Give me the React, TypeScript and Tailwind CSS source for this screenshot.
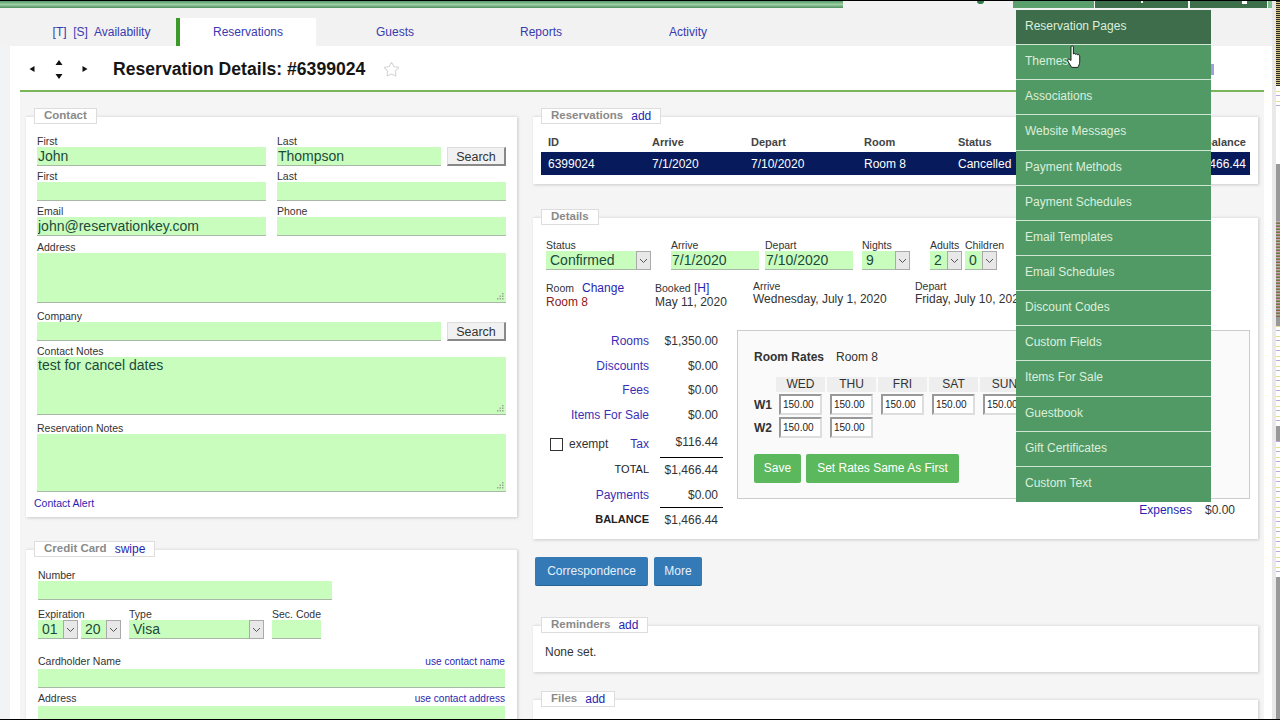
import React from 'react';
import { Star } from 'lucide-react';

const menuItems = [
  'Reservation Pages', 'Themes', 'Associations', 'Website Messages', 'Payment Methods', 'Payment Schedules', 'Email Templates',
  'Email Schedules', 'Discount Codes', 'Custom Fields', 'Items For Sale', 'Guestbook', 'Gift Certificates', 'Custom Text',
];

const green = 'bg-[#c9fdbd] border-b-[1.5px] border-[#a9b8a6] text-[14px] text-[#1c4a3c] outline-none';

function Label({ children }: { children: React.ReactNode }) {
  return <div className="h-[13px] leading-[15px] text-[10.5px] text-[#333] whitespace-nowrap">{children}</div>;
}

function TextInput({ value = '', className = '' }: { value?: string; className?: string }) {
  return <input readOnly defaultValue={value} className={'block h-[19px] px-[1px] ' + green + ' ' + className} />;
}

function TextBox({ value = '', className = '' }: { value?: string; className?: string }) {
  return (
    <div className="relative">
      <textarea readOnly defaultValue={value} className={'block w-full px-[1px] leading-[16px] resize-none ' + green + ' ' + className} />
      <svg className="absolute right-[2px] bottom-[3px]" width="7" height="7" viewBox="0 0 7 7" fill="#9aa896">
        <rect x="5" y="0" width="1.500" height="1.500" />
        <rect x="2.500" y="2.500" width="1.500" height="1.500" />
        <rect x="5" y="2.500" width="1.500" height="1.500" />
        <rect x="0" y="5" width="1.500" height="1.500" />
        <rect x="2.500" y="5" width="1.500" height="1.500" />
        <rect x="5" y="5" width="1.500" height="1.500" />
      </svg>
    </div>
  );
}

function SearchButton() {
  return (
    <button className="ml-[6px] w-[59px] h-[19px] text-[12.5px] text-[#333] bg-[#f1f1f1] border border-[#ddd] border-r-[#888] border-b-[#888] border-r-2 border-b-2">
      Search
    </button>
  );
}

function Select({ value, className = '' }: { value: string; className?: string }) {
  return (
    <div className={'flex h-[19px] ' + className}>
      <div className={'flex-1 pl-[4px] leading-[19px] ' + green}>{value}</div>
      <div className="w-[15px] bg-[#e8e8e8] border border-[#aaa] flex items-center justify-center">
        <svg width="9" height="6" viewBox="0 0 9 6" fill="none" stroke="#555" strokeWidth="1"><path d="M1 1l3.5 3.5L8 1" /></svg>
      </div>
    </div>
  );
}

function Panel({ legend, add, className = '', children }: { legend: string; add?: string; className?: string; children?: React.ReactNode }) {
  return (
    <section className={'relative bg-white border-t border-[#e6e6e6] shadow-[1px_1px_3px_rgba(0,0,0,0.18)] ' + className}>
      <div className="absolute -top-[9px] left-[8px] h-[16px] px-[9px] flex items-center gap-[8px] bg-white border border-[#ddd] text-[12px] leading-none">
        <span className="font-bold text-[11.5px] text-[#8a8a8a]">{legend}</span>
        {add && <a className="text-[#2a1fb0]">{add}</a>}
      </div>
      {children}
    </section>
  );
}

function TotalRow({ label, value, h, link, bold, line, low, children }: { label: string; value: string; h: string; link?: boolean; bold?: boolean; line?: boolean; low?: boolean; children?: React.ReactNode }) {
  return (
    <div className={'flex items-center text-[12px] ' + h}>
      <div className={'w-[116px] flex justify-end ' + (low ? 'mt-[4px] ' : '') + (link ? 'text-[#3a2fb5]' : bold ? 'font-bold text-[11px] text-[#222]' : 'text-[11px] text-[#222]')}>
        {children}
        {label}
      </div>
      <div className={'ml-[11px] w-[63px] h-full pr-[5px] flex items-center justify-end text-[#333] ' + (line ? 'border-t border-black' : '')}>{value}</div>
    </div>
  );
}

function RateInput() {
  return (
    <input
      readOnly
      defaultValue="150.00"
      className="block ml-[3px] w-[43px] h-[21px] pl-[2px] text-[10px] text-[#222] bg-white border-2 border-t-[#999] border-l-[#999] border-r-[#ddd] border-b-[#ddd] outline-none"
    />
  );
}

function RoomRates() {
  const days = ['WED', 'THU', 'FRI', 'SAT', 'SUN'];
  return (
    <div className="h-[169px] pl-[16px] pt-[19px] border border-[#ccc] bg-[#fafafa]">
      <div className="flex text-[12px] leading-[14px] text-[#333]">
        <span className="font-bold w-[82px]">Room Rates</span>
        <span>Room 8</span>
      </div>
      <div className="mt-[13px] grid grid-cols-[20px_repeat(5,49px)] gap-x-[2px] gap-y-[2px] items-center">
        <div />
        {days.map((d) => (
          <div key={d} className="h-[15px] leading-[15px] bg-[#eee] text-center text-[12px] text-[#333]">{d}</div>
        ))}
        <div className="text-[12px] font-bold text-[#333]">W1</div>
        {days.map((d) => <RateInput key={d} />)}
        <div className="text-[12px] font-bold text-[#333]">W2</div>
        <RateInput />
        <RateInput />
      </div>
      <div className="mt-[16px] flex gap-[5px] text-[12px] text-white">
        <button className="w-[47px] h-[29px] pb-[1px] bg-[#5cb85c] rounded-[2px]">Save</button>
        <button className="w-[153px] h-[29px] pb-[1px] bg-[#5cb85c] rounded-[2px]">Set Rates Same As First</button>
      </div>
    </div>
  );
}

function ContactPanel() {
  return (
    <Panel legend="Contact" className="h-[401px] pl-[11px] pr-[11px] pt-[17px]">
      <div className="flex">
        <div className="w-[229px]"><Label>First</Label><TextInput value="John" className="w-full" /></div>
        <div className="ml-[11px]"><Label>Last</Label>
          <div className="flex"><TextInput value="Thompson" className="w-[164px]" /><SearchButton /></div>
        </div>
      </div>
      <div className="flex mt-[3px]">
        <div className="w-[229px]"><Label>First</Label><TextInput className="w-full" /></div>
        <div className="ml-[11px] w-[229px]"><Label>Last</Label><TextInput className="w-full" /></div>
      </div>
      <div className="flex mt-[3px]">
        <div className="w-[229px]"><Label>Email</Label><TextInput value="john@reservationkey.com" className="w-full" /></div>
        <div className="ml-[11px] w-[229px]"><Label>Phone</Label><TextInput className="w-full" /></div>
      </div>
      <div className="mt-[4px]"><Label>Address</Label><TextBox className="h-[50px]" /></div>
      <div className="mt-[6px]"><Label>Company</Label>
        <div className="flex"><TextInput className="w-[404px]" /><SearchButton /></div>
      </div>
      <div className="mt-[3px]"><Label>Contact Notes</Label><TextBox value="test for cancel dates" className="h-[58px]" /></div>
      <div className="mt-[6px]"><Label>Reservation Notes</Label><TextBox className="h-[58px]" /></div>
      <a className="block mt-[4px] -ml-[3px] text-[10.5px] leading-[14px] text-[#2a1fb0]">Contact Alert</a>
    </Panel>
  );
}

function CardPanel() {
  return (
    <Panel legend="Credit Card" add="swipe" className="mt-[32px] h-[220px] pl-[12px] pr-[12px] pt-[18px]">
      <Label>Number</Label>
      <TextInput className="w-[294px]" />
      <div className="flex mt-[7px]">
        <div className="w-[91px]">
          <Label>Expiration</Label>
          <div className="flex gap-[3px]">
            <Select value="01" className="w-[40px]" />
            <Select value="20" className="w-[40px]" />
          </div>
        </div>
        <div className="w-[143px]"><Label>Type</Label><Select value="Visa" className="w-[135px]" /></div>
        <div className="w-[49px]"><Label>Sec. Code</Label><TextInput className="w-full" /></div>
      </div>
      <div className="mt-[15px] flex justify-between"><Label>Cardholder Name</Label><a className="text-[10.1px] leading-[15px] text-[#2a1fb0]">use contact name</a></div>
      <TextInput className="w-[467px]" />
      <div className="mt-[3px] flex justify-between"><Label>Address</Label><a className="text-[10.1px] leading-[15px] text-[#2a1fb0]">use contact address</a></div>
      <TextInput className="w-[467px]" />
    </Panel>
  );
}

function ReservationsPanel() {
  return (
    <Panel legend="Reservations" add="add" className="h-[68px] pl-[8px] pr-[8px] pt-[17px]">
      <div className="flex h-[16px] mb-[2px] items-center text-[11px] font-bold text-[#444]">
        <span className="pl-[7px] w-[111px]">ID</span>
        <span className="w-[99px]">Arrive</span>
        <span className="w-[113px]">Depart</span>
        <span className="w-[94px]">Room</span>
        <span>Status</span>
        <span className="ml-auto pr-[4px]">Balance</span>
      </div>
      <div className="flex h-[23px] items-center bg-[#061a5c] text-[12px] text-white">
        <span className="pl-[7px] w-[111px]">6399024</span>
        <span className="w-[99px]">7/1/2020</span>
        <span className="w-[113px]">7/10/2020</span>
        <span className="w-[94px]">Room 8</span>
        <span>Cancelled</span>
        <span className="ml-auto pr-[4px]">$1,466.44</span>
      </div>
    </Panel>
  );
}

function DetailsPanel() {
  return (
    <Panel legend="Details" className="mt-[33px] h-[322px] pl-[13px] pt-[22px]">
      <div className="flex text-[10.5px] leading-[11px] text-[#333]">
        <div className="w-[105px]"><div>Status</div><Select value="Confirmed" /></div>
        <div className="ml-[20px] w-[88px]"><div>Arrive</div><TextInput value="7/1/2020" className="w-full" /></div>
        <div className="ml-[6px] w-[88px]"><div>Depart</div><TextInput value="7/10/2020" className="w-full" /></div>
        <div className="ml-[9px] w-[48px]"><div>Nights</div><Select value="9" /></div>
        <div className="ml-[20px] w-[32px]"><div>Adults</div><Select value="2" /></div>
        <div className="ml-[3px] w-[32px]"><div>Children</div><Select value="0" /></div>
      </div>
      <div className="flex mt-[11px] text-[12px] leading-[14px] text-[#333]">
        <div className="w-[109px]">
          <div><span className="text-[10.5px]">Room</span><a className="ml-[8px] text-[#2a1fb0]">Change</a></div>
          <div className="text-[#8b1a1a]">Room 8</div>
        </div>
        <div className="w-[98px]">
          <div><span className="text-[10.5px]">Booked</span> <a className="text-[#2a1fb0]">[H]</a></div>
          <div>May 11, 2020</div>
        </div>
        <div className="w-[162px] -mt-[2px]">
          <div className="text-[10.5px]">Arrive</div>
          <div className="-mt-[1px]">Wednesday, July 1, 2020</div>
        </div>
        <div className="-mt-[2px]">
          <div className="text-[10.5px]">Depart</div>
          <div className="-mt-[1px]">Friday, July 10, 2020</div>
        </div>
      </div>
      <div className="flex mt-[21px] -ml-[13px]">
        <div className="w-[204px] -mt-[1px]">
          <TotalRow label="Rooms" value="$1,350.00" h="h-[24.5px]" link />
          <TotalRow label="Discounts" value="$0.00" h="h-[24.5px]" link />
          <TotalRow label="Fees" value="$0.00" h="h-[24.5px]" link />
          <TotalRow label="Items For Sale" value="$0.00" h="h-[24.5px]" link />
          <TotalRow label="Tax" value="$116.44" h="h-[30px]" link low>
            <span className="mr-auto ml-[17px] flex items-center text-[#333]">
              <span className="w-[13px] h-[13px] border border-[#333] bg-white mr-[6px]" />
              exempt
            </span>
          </TotalRow>
          <TotalRow label="TOTAL" value="$1,466.44" h="h-[25px]" line />
          <TotalRow label="Payments" value="$0.00" h="h-[25px]" link />
          <TotalRow label="BALANCE" value="$1,466.44" h="h-[24px]" bold line />
        </div>
        <div className="w-[513px]">
          <RoomRates />
          <div className="mt-[4px] flex justify-end text-[12px] leading-[14px] pr-[15px]">
            <a className="text-[#2a1fb0]">Expenses</a>
            <span className="ml-[13px] text-[#333]">$0.00</span>
          </div>
        </div>
      </div>
    </Panel>
  );
}

function NoiseStrip() {
  const dots = 'bg-[repeating-linear-gradient(0deg,#2a2a2a_0_1px,#d6c27a_1px_2px)]';
  const colored = 'bg-[repeating-linear-gradient(0deg,#8a6a4a_0_1px,#7f9a6a_1px_2px,#c9a4b8_2px_3px)]';
  const specks = 'bg-[repeating-linear-gradient(0deg,#fff_0_5px,#b9a8d8_5px_6px,#fff_6px_9px,#e6e08a_9px_10px)]';
  return (
    <div className="w-[8px] flex bg-[#eee]">
      <div className="w-[4px] bg-[#e9e9e9]" />
      <div className="w-[4px] flex flex-col">
        <div className={'h-[85px] shrink-0 ' + dots} />
        <div className="h-[78px] shrink-0 bg-white"><div className={'h-[25px] ' + specks} /></div>
        <div className="h-[57px] shrink-0 bg-[#999]" />
        <div className={'h-[96px] shrink-0 ' + colored} />
        <div className="h-[9px] shrink-0 bg-[#999]" />
        <div className={'h-[100px] shrink-0 ' + specks} />
        <div className="h-[15px] shrink-0 bg-[#999]" />
        <div className={'h-[136px] shrink-0 ' + specks} />
        <div className="flex-1 bg-[#999]" />
      </div>
    </div>
  );
}

export default function App() {
  return (
    <div className="relative w-[1280px] h-[720px] overflow-hidden flex border-t border-b border-black bg-[#f2f3f4] font-['Liberation_Sans',Arial,sans-serif]">
      <div className="w-[1272px] flex flex-col">
        <div className="h-[7px] flex shrink-0">
          <div className="w-[843px] bg-linear-to-b from-[#55996a] via-[#9ad0a4] to-[#4f8f5f]" />
          <div className="w-[169px] bg-[#f3f3f3] flex justify-end pr-[28px]"><div className="w-[7px] h-[3px] rounded-b-full bg-[#2f7a4a]" /></div>
          <div className="w-[81px] ml-[1px] bg-[#5a9f6c]" />
          <div className="w-[93px] ml-[1px] bg-[#3c6e4a] flex justify-center"><div className="w-[2px] h-[2px] bg-white" /></div>
          <div className="w-[77px] ml-[2px] bg-[#3c6e4a] flex justify-end pr-[20px]"><div className="w-[5px] h-[3px] bg-white" /></div>
          <div className="flex-1 ml-[1px] bg-[#7fbf8f]" />
        </div>

        <div className="h-[38px] shrink-0 pl-[27px] flex items-end bg-[#f2f2f2] text-[12px] text-[#3a3ab0]">
          <a className="w-[149px] h-[28px] leading-[28px] text-center">[T]&nbsp; [S]&nbsp; Availability</a>
          <a className="w-[140px] h-[28px] leading-[28px] text-center bg-white border-l-4 border-[#3b9a2b]">Reservations</a>
          <a className="w-[158px] h-[28px] leading-[28px] text-center">Guests</a>
          <a className="w-[134px] h-[28px] leading-[28px] text-center">Reports</a>
          <a className="w-[160px] h-[28px] leading-[28px] text-center">Activity</a>
        </div>

        <div className="flex-1 min-h-0 ml-[10px] bg-white pr-[8px] pl-[10px] overflow-hidden">
          <div className="h-[46px] pt-[2px] flex items-center border-b-2 border-[#7ab55c]">
            <svg width="70" height="26" viewBox="0 0 70 26" fill="#111">
              <path d="M9.500 13l5-3v6z" />
              <path d="M39 4l3.500 5h-7zM39 23l3.500-5h-7z" />
              <path d="M62.500 10l5 3-5 3z" />
            </svg>
            <h1 className="ml-[23px] text-[17.6px] font-bold text-[#151515]">Reservation Details: #6399024</h1>
            <Star className="ml-[18px] text-[#d5d5d5]" size={17} strokeWidth={1.5} />
            <div className="ml-auto mr-[50px] w-[3px] h-[11px] bg-[#a0a0dc]" />
          </div>

          <div className="h-[640px] bg-[#f5f5f6] pl-[6px] pt-[24px] flex gap-[16px]">
            <div className="w-[491px] shrink-0">
              <ContactPanel />
              <CardPanel />
            </div>
            <div className="w-[725px] shrink-0">
              <ReservationsPanel />
              <DetailsPanel />
              <div className="mt-[18px] ml-[2px] flex gap-[6px] text-[12px] text-[#e6f0fa]">
                <button className="w-[113px] h-[29px] bg-[#337ab7] rounded-[2px] border-b border-[#2a6496]">Correspondence</button>
                <button className="w-[48px] h-[29px] bg-[#337ab7] rounded-[2px] border-b border-[#2a6496]">More</button>
              </div>
              <Panel legend="Reminders" add="add" className="mt-[39px] h-[47px] pl-[12px] pt-[19px]">
                <p className="text-[12px] leading-[14px] text-[#333]">None set.</p>
              </Panel>
              <Panel legend="Files" add="add" className="mt-[27px] h-[40px]" />
            </div>
          </div>
        </div>
      </div>
      <NoiseStrip />

      <nav className="absolute left-[1016px] top-[9px] w-[195px] text-[12px] text-[#dcefdc]">
        {menuItems.map((item, i) => (
          <div
            key={item}
            className={'h-[35.15px] pl-[9px] pb-[2px] flex items-center border-b border-[#cfe5d3] ' + (i === 0 ? 'bg-[#3d6d4a]' : 'bg-[#529a65]') + (i === 13 ? ' border-b-0' : '')}
          >
            {item}
          </div>
        ))}
      </nav>

      <svg className="absolute left-[1066px] top-[44px]" width="16" height="24" viewBox="0 0 16 24" fill="#fff" stroke="#111" strokeWidth="0.9">
        <path d="M5 2c0-1.600 2.400-1.600 2.400 0v7c.6-.8 2-.6 2.200.4.600-.7 2-.5 2.100.5.700-.5 2-.2 2 1v5.500c0 3-1.200 4.500-1.800 6H5.600c-.6-1.600-2.200-3.400-3.800-6.400-.9-1.700 1-2.600 2-1.400L5 15.500z" />
      </svg>
    </div>
  );
}
